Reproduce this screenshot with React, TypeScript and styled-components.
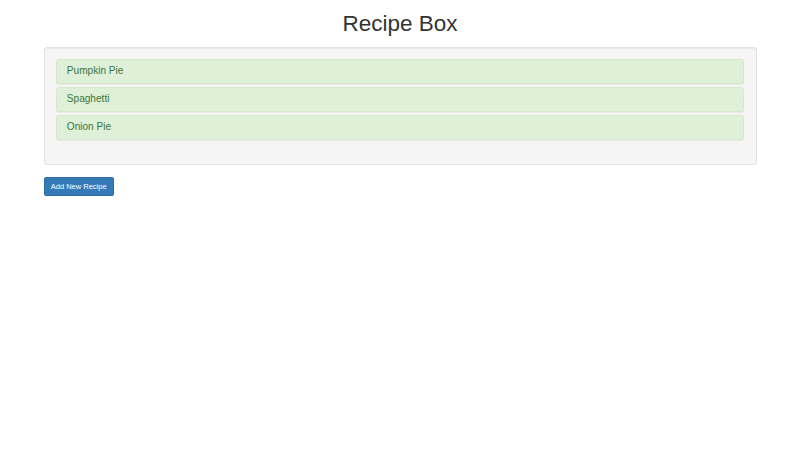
import React from "react";
import styled, { createGlobalStyle } from "styled-components";

const Global = createGlobalStyle`
  html, body { margin: 0; padding: 0; background: #fff; }
  body {
    font-family: "Liberation Sans", Arial, Helvetica, sans-serif;
    color: #333;
  }
`;

const Container = styled.div`
  width: 713px;
  margin: 0 auto;
`;

const Title = styled.h1`
  margin: 12px 0 0;
  font-size: 22.5px;
  line-height: 24.75px;
  font-weight: 500;
  text-align: center;
  color: #333;
`;

const Well = styled.div`
  margin-top: 10px;
  background: #f5f5f5;
  border: 1px solid #e3e3e3;
  border-radius: 2.5px;
  box-shadow: inset 0 1px 1px rgba(0, 0, 0, 0.05);
  padding: 11px 11.9px 11.5px;
`;

const PanelGroup = styled.div`
  display: flex;
  flex-direction: column;
  gap: 3px;
  margin-bottom: 12.5px;
`;

const RecipeItem = styled.div`
  background: #dff0d8;
  border: 1px solid #d6e9c6;
  border-radius: 2.5px;
  color: #3c763d;
  padding: 0 9.4px;
  font-size: 10.1px;
  line-height: 12px;
  height: 25px;
  box-sizing: border-box;
  display: flex;
  align-items: center;
  box-shadow: 0 1px 1px rgba(0, 0, 0, 0.05);
`;

const AddButton = styled.button`
  margin-top: 12px;
  background: #337ab7;
  border: 1px solid #2e6da4;
  border-radius: 2px;
  color: #fff;
  font-family: "Liberation Sans", Arial, Helvetica, sans-serif;
  font-size: 7.5px;
  line-height: 11.25px;
  padding: 3px 6.25px;
  height: 19px;
  white-space: nowrap;
  cursor: pointer;
  display: block;
`;

const recipes = ["Pumpkin Pie", "Spaghetti", "Onion Pie"];

export default function App() {
  return (
    <>
      <Global />
      <Container>
        <Title>Recipe Box</Title>
        <Well>
          <PanelGroup>
            {recipes.map((r) => (
              <RecipeItem key={r}>{r}</RecipeItem>
            ))}
          </PanelGroup>
        </Well>
        <AddButton>Add New Recipe</AddButton>
      </Container>
    </>
  );
}
